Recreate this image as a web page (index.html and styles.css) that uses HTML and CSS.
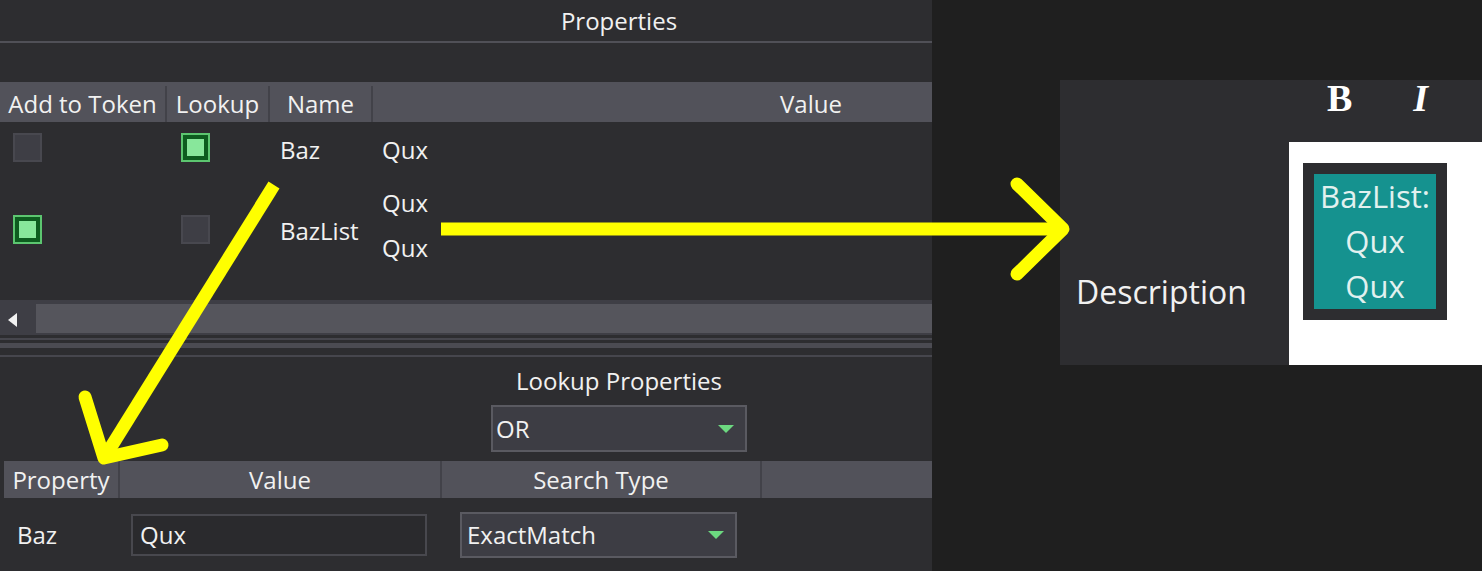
FILE: index.html
```html
<!DOCTYPE html>
<html lang="en">

<head>
    <meta charset="UTF-8">
    <meta name="viewport" content="width=device-width, initial-scale=1.0">
    <title>Token Properties</title>
    <link rel="stylesheet" href="styles.css">
</head>

<body>
    <div class="app">
        <div class="props-pane">
            <div class="props-inner">
                <div class="pane-title">Properties</div>
                <div class="pane-gap"></div>

                <div class="grid-head">
                    <div class="col c-token">Add to Token</div>
                    <div class="col c-lookup">Lookup</div>
                    <div class="col c-name">Name</div>
                    <div class="col c-value">Value</div>
                </div>
                <div class="grid-rows">
                    <div class="grid-row row-single">
                        <div class="cell c-token"><span class="check"></span></div>
                        <div class="cell c-lookup"><span class="check on"></span></div>
                        <div class="cell c-name">Baz</div>
                        <div class="cell c-value">Qux</div>
                    </div>
                    <div class="grid-row row-multi">
                        <div class="cell c-token"><span class="check on"></span></div>
                        <div class="cell c-lookup"><span class="check"></span></div>
                        <div class="cell c-name">BazList</div>
                        <div class="cell c-value">Qux<br>Qux</div>
                    </div>
                </div>
                <div class="hscroll">
                    <div class="hs-btn"><span class="hs-arrow"></span></div>
                    <div class="hs-thumb"></div>
                </div>

                <div class="splitter"></div>

                <div class="lookup">
                    <div class="lookup-title">Lookup Properties</div>
                    <div class="combo combo-mode">OR<span class="caret"></span></div>
                </div>

                <div class="lk-head">
                    <div class="col k-prop">Property</div>
                    <div class="col k-value">Value</div>
                    <div class="col k-type">Search Type</div>
                    <div class="col k-rest"></div>
                </div>
                <div class="lk-row">
                    <div class="lk-cell k-prop">Baz</div>
                    <div class="lk-cell k-value"><div class="textbox">Qux</div></div>
                    <div class="lk-cell k-type"><div class="combo combo-type">ExactMatch<span class="caret"></span></div></div>
                </div>
            </div>
        </div>

        <div class="preview-area">
            <div class="preview">
                <div></div>
                <div class="fmt-bar"><span class="fmt-b">B</span><span class="fmt-i">I</span></div>
                <div class="desc-label">Description</div>
                <div class="desc-doc">
                    <div class="token">
                        <div class="token-body">BazList:<br>Qux<br>Qux</div>
                    </div>
                </div>
            </div>
        </div>
    </div>

    <!-- callout arrows drawn over the screenshot -->
    <svg class="arrows" width="1482" height="571" viewBox="0 0 1482 571">
        <g stroke="#ffff00" stroke-width="13" fill="none">
            <line x1="274" y1="185" x2="106" y2="455" />
            <polyline points="85,397 104,458 162,445" stroke-linecap="round" stroke-linejoin="round" />
            <line x1="441" y1="229" x2="1060" y2="229" />
            <polyline points="1017,184 1063,229 1017,274" stroke-linecap="round" stroke-linejoin="round" />
        </g>
    </svg>
</body>

</html>
```

FILE: styles.css
```css
body {
    margin: 0;
    background-color: #1f1f1f;
    font-family: "Open Sans", "Noto Sans", sans-serif;
    font-size: 24px;
    color: #f1f1f1;
}

.app {
    display: flex;
    height: 571px;
    overflow: hidden;
}

.props-pane {
    width: 932px;
    flex: none;
    overflow: hidden;
    background-color: #2d2d30;
}

.props-inner {
    width: 1238px;
}

.pane-title {
    height: 41px;
    line-height: 41px;
    text-align: center;
    border-bottom: 2px solid #505057;
}

.pane-gap {
    height: 39px;
}

/* properties grid */
.grid-head {
    display: flex;
    height: 36px;
    padding-top: 4px;
    background-color: #52525a;
}

.grid-head .col,
.lk-head .col {
    box-sizing: border-box;
    text-align: center;
    white-space: nowrap;
    flex: none;
}

.grid-head .col {
    line-height: 36px;
    border-left: 2px solid #424249;
}

.grid-head .col:first-child {
    border-left: none;
}

.c-token {
    width: 165px;
}

.c-lookup {
    width: 103px;
}

.c-name {
    width: 103px;
}

.c-value {
    width: 878px;
}

.grid-rows {
    height: 178px;
}

.grid-row {
    display: flex;
    align-items: flex-start;
    box-sizing: border-box;
}

.row-single {
    height: 56px;
    padding-top: 5px;
}

.row-multi {
    height: 122px;
    padding-top: 2px;
}

.cell {
    box-sizing: border-box;
    flex: none;
    line-height: 45px;
}

.cell.c-token {
    padding-left: 13px;
}

.cell.c-lookup {
    padding-left: 16px;
}

.cell.c-name {
    padding-left: 12px;
}

.cell.c-value {
    padding-left: 11px;
}

.row-single .check {
    margin-top: 6px;
}

.row-multi .check {
    margin-top: 35px;
}

.row-multi .c-name {
    margin-top: 28px;
}

.check {
    display: block;
    width: 29px;
    height: 29px;
    box-sizing: border-box;
    background-color: #3e3e45;
    border: 2px solid #48484f;
}

.check.on {
    background-color: #88e79b;
    border-color: #5cc670;
    box-shadow: inset 0 0 0 4px #0d5c1f;
}

.hscroll {
    display: flex;
    height: 35px;
    background-color: #3e3e45;
}

.hs-btn {
    width: 36px;
    display: flex;
    align-items: center;
    padding-left: 8px;
    padding-top: 5px;
    box-sizing: border-box;
}

.hs-arrow {
    width: 0;
    height: 0;
    border-top: 7px solid transparent;
    border-bottom: 7px solid transparent;
    border-right: 9px solid #f2f2f2;
}

.hs-thumb {
    flex: 1;
    margin-top: 4px;
    height: 29px;
    background-color: #55555c;
}

.splitter {
    height: 24px;
    background: linear-gradient(to bottom,
        #2d2d30 0 3px, #46464d 3px 5px, #2d2d30 5px 8px,
        #4b4b52 8px 13px, #2d2d30 13px 20px, #46464d 20px 22px, #2d2d30 22px);
}

/* lookup section */
.lookup {
    height: 102px;
    box-sizing: border-box;
    padding-top: 2px;
    display: flex;
    flex-direction: column;
    align-items: center;
}

.lookup-title {
    line-height: 40px;
}

.combo {
    display: flex;
    align-items: center;
    justify-content: space-between;
    box-sizing: border-box;
    background-color: #3d3d44;
    border: 2px solid #5a5a61;
    padding: 0 11px 0 3px;
}

.combo-mode {
    margin-top: 4px;
    width: 256px;
    height: 47px;
}

.caret {
    width: 0;
    height: 0;
    border-left: 8px solid transparent;
    border-right: 8px solid transparent;
    border-top: 8px solid #6cd880;
}

.lk-head {
    display: flex;
    margin-left: 4px;
    height: 37px;
    background-color: #52525a;
}

.lk-head .col {
    line-height: 37px;
    border-left: 2px solid #424249;
}

.lk-head .col:first-child {
    border-left: none;
}

.lk-head .k-prop {
    width: 114px;
}

.k-value {
    width: 322px;
}

.k-type {
    width: 320px;
}

.lk-head .k-rest {
    flex: 1;
}

.lk-row {
    display: flex;
    align-items: center;
    height: 73px;
}

.lk-cell {
    flex: none;
    box-sizing: border-box;
}

.lk-cell.k-prop {
    width: 118px;
    padding-left: 17px;
}

.textbox {
    margin-left: 13px;
    width: 296px;
    height: 42px;
    line-height: 38px;
    box-sizing: border-box;
    padding-left: 7px;
    background-color: #2a2a2d;
    border: 2px solid #48484e;
}

.combo-type {
    margin-left: 20px;
    width: 277px;
    height: 46px;
    padding-left: 5px;
}

/* description preview */
.preview-area {
    flex: 1;
    padding: 80px 0 0 128px;
}

.preview {
    display: grid;
    grid-template-columns: 229px 1fr;
    grid-template-rows: 62px 223px;
    background-color: #2d2d30;
}

.fmt-bar {
    display: flex;
    align-items: flex-start;
    gap: 61px;
    padding: 3px 0 0 38px;
    font-family: "Liberation Serif", serif;
    font-weight: bold;
    font-size: 38px;
    line-height: 30px;
    color: #ffffff;
}

.fmt-i {
    font-style: italic;
}

.desc-label {
    padding: 128px 0 0 16px;
    font-size: 32px;
    line-height: 44px;
}

.desc-doc {
    background-color: #ffffff;
    padding: 21px 0 0 14px;
}

.token {
    width: 144px;
    box-sizing: border-box;
    border: 11px solid #2d2d30;
}

.token-body {
    background-color: #15928f;
    color: #e2f1ef;
    font-size: 31px;
    line-height: 45px;
    text-align: center;
}

.arrows {
    position: absolute;
    left: 0;
    top: 0;
    pointer-events: none;
}
```
